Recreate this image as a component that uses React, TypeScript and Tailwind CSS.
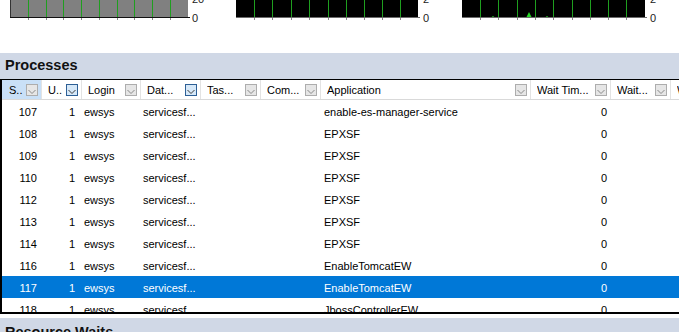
import React from "react";

type Col = {
  key: string;
  title: string;
  w: string;
  cell: string;
  hl?: boolean;
  blue?: boolean;
};

const columns: Col[] = [
  { key: "id", title: "S..", w: "w-[40px]", cell: "justify-end pr-[5px]", hl: true },
  { key: "u", title: "U..", w: "w-[40px]", cell: "justify-end pr-[7px]", blue: true },
  { key: "login", title: "Login", w: "w-[59px]", cell: "pl-[2px]" },
  { key: "db", title: "Dat...", w: "w-[60px]", cell: "pl-[2px]", blue: true },
  { key: "task", title: "Tas...", w: "w-[60px]", cell: "pl-[2px]" },
  { key: "cmd", title: "Com...", w: "w-[60px]", cell: "pl-[2px]" },
  { key: "app", title: "Application", w: "w-[210px]", cell: "pl-[3px]" },
  { key: "wt", title: "Wait Tim...", w: "w-[80px]", cell: "justify-end pr-[4px]" },
  { key: "wait", title: "Wait...", w: "w-[60px]", cell: "pl-[2px]" },
  { key: "w", title: "W...", w: "w-[80px]", cell: "pl-[2px]" },
];

const rows: Record<string, string>[] = [
  ["107", "enable-es-manager-service"],
  ["108", "EPXSF"],
  ["109", "EPXSF"],
  ["110", "EPXSF"],
  ["112", "EPXSF"],
  ["113", "EPXSF"],
  ["114", "EPXSF"],
  ["116", "EnableTomcatEW"],
  ["117", "EnableTomcatEW"],
  ["118", "JbossControllerEW"],
].map(([id, app]) => ({
  id,
  u: "1",
  login: "ewsys",
  db: "servicesf...",
  task: "",
  cmd: "",
  app,
  wt: "0",
  wait: "",
  w: "",
}));

const selectedId = "117";

// little dropdown box in each header cell
const FilterBox = ({ blue }: { blue?: boolean }) => (
  <svg width="12" height="12" viewBox="0 0 12 12" className="shrink-0 mr-[3px]">
    <rect
      x="0.5"
      y="0.5"
      width="11"
      height="11"
      fill={blue ? "#d6e8f8" : "#e6e6e6"}
      stroke={blue ? "#2d5f95" : "#adadad"}
    />
    <polyline
      points="2.5,6 6,9.5 9.5,6"
      fill="none"
      stroke={blue ? "#3c3c3c" : "#8a8a8a"}
      strokeWidth="1"
    />
  </svg>
);

type ChartProps = {
  width: number;
  boxW: number;
  fill: string;
  lines: number[];
  top: string;
  labelX: number;
  bumps?: { x: number; h: number; w: number }[];
  grayAxis?: boolean;
};

const Chart = ({ width, boxW, fill, lines, top, labelX, bumps, grayAxis }: ChartProps) => (
  <svg width={width} height="24" className="shrink-0 block">
    <rect x="0" y="-2" width={boxW} height="20" fill={fill} />
    {!grayAxis && <line x1="0.5" y1="-2" x2="0.5" y2="18" stroke="#333" />}
    {lines.map((x) => (
      <line key={x} x1={x + 0.5} y1="-2" x2={x + 0.5} y2="18" stroke="#1f9f1f" />
    ))}
    {bumps?.map((b) => (
      <polygon
        key={b.x}
        points={`${b.x - b.w / 2},18 ${b.x},${18 - b.h} ${b.x + b.w / 2},18`}
        fill="#27d827"
      />
    ))}
    <line
      x1="0"
      y1="17.5"
      x2={boxW + 2}
      y2="17.5"
      stroke={grayAxis ? "#6b6b6b" : "#111"}
    />
    {lines.map((x) => (
      <line key={"t" + x} x1={x + 0.5} y1="18" x2={x + 0.5} y2="20" stroke="#888" />
    ))}
    <text x={labelX} y="3" fontSize="11" fill="#222" fontFamily="'Liberation Sans', Arial, sans-serif">
      {top}
    </text>
    <text x={labelX} y="21.5" fontSize="11" fill="#222" fontFamily="'Liberation Sans', Arial, sans-serif">
      0
    </text>
  </svg>
);

const App = () => {
  return (
    <div className="w-[679px] h-[332px] overflow-hidden bg-white font-['Liberation_Sans',Arial,sans-serif] text-black">
      {/* Charts strip */}
      <div className="h-[53px] flex items-start pl-[10px]">
        <Chart
          width={226}
          boxW={178}
          fill="#808080"
          lines={[18, 36, 53, 71, 89, 107, 124, 142, 160]}
          top="20"
          labelX={182}
        />
        <Chart
          width={226}
          boxW={182}
          fill="#000"
          lines={[18, 36, 55, 73, 92, 110, 128, 146, 164]}
          top="2"
          labelX={187}
          grayAxis
        />
        <Chart
          width={217}
          boxW={183}
          fill="#000"
          lines={[18, 36, 55, 73, 91, 110, 128, 146, 164]}
          top="2"
          labelX={188}
          grayAxis
          bumps={[
            { x: 13, h: 1, w: 5 },
            { x: 31, h: 2, w: 5 },
            { x: 50, h: 1, w: 5 },
            { x: 67, h: 6, w: 6 },
            { x: 85, h: 2, w: 5 },
            { x: 92, h: 1, w: 4 },
            { x: 104, h: 1, w: 4 },
          ]}
        />
      </div>

      {/* Processes */}
      <div className="h-[26px] bg-[#d0d8e6] pl-[5px] pt-[4px]">
        <h2 className="text-[14.5px] leading-[17px] font-bold text-[#111]">Processes</h2>
      </div>

      <div className="border-t border-black border-l-2 border-b-2 border-r-0">
        <div className="h-[232px] overflow-hidden">
          {/* header */}
          <div className="flex h-[20px] border-b border-[#d9d9d9] text-[11px] whitespace-nowrap">
            {columns.map((c, i) => (
              <div
                key={c.key}
                className={`${c.w} shrink-0 flex items-center border-r border-[#e3e3e3] ${
                  c.hl ? "bg-[#c9e0f7]" : ""
                } ${i === 0 ? "pl-[7px]" : "pl-[6px]"}`}
              >
                <span className="flex-1 overflow-hidden pt-[1px]">{c.title}</span>
                <FilterBox blue={c.blue} />
              </div>
            ))}
          </div>

          {/* rows */}
          {rows.map((r) => {
            const sel = r.id === selectedId;
            return (
              <div
                key={r.id}
                className={`flex h-[22px] text-[11px] whitespace-nowrap ${
                  sel ? "bg-[#0078d7] text-white" : ""
                }`}
              >
                {columns.map((c) => (
                  <div key={c.key} className={`${c.w} shrink-0 flex items-center pt-[2px] ${c.cell}`}>
                    {r[c.key]}
                  </div>
                ))}
              </div>
            );
          })}
        </div>
      </div>

      {/* Resource Waits */}
      <div className="mt-[4px] h-[40px] bg-[#d0d8e6] pl-[5px] pt-[6px]">
        <h2 className="text-[14.5px] leading-[17px] font-bold text-[#111]">Resource Waits</h2>
      </div>
    </div>
  );
};

export default App;
